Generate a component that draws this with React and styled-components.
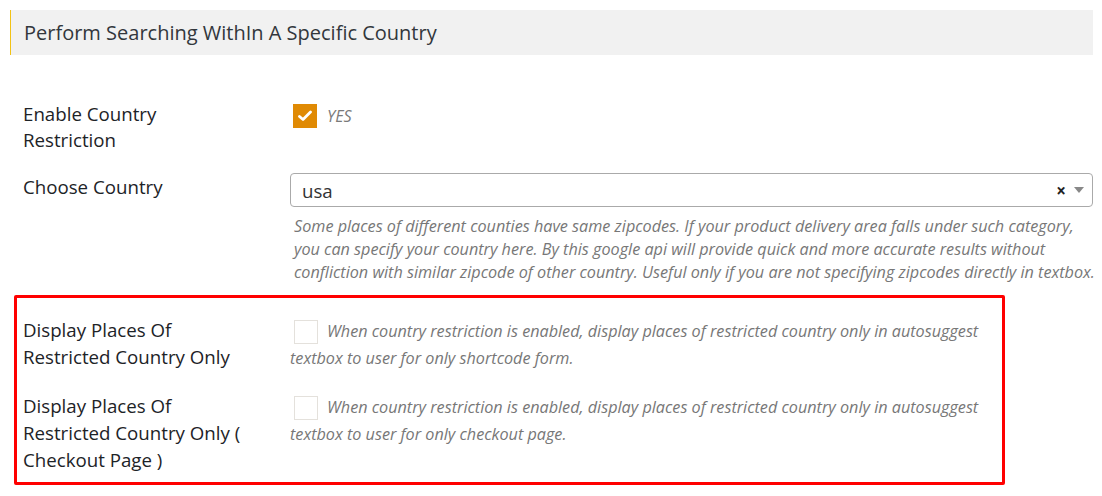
import React from "react";
import styled, { createGlobalStyle } from "styled-components";

const GlobalStyle = createGlobalStyle`
  body {
    margin: 0;
    background: #fff;
    font-family: "Open Sans", "Noto Sans", sans-serif;
  }
`;

const Page = styled.div`
  width: 1102px;
  padding-top: 10px;
`;

const Header = styled.h2`
  margin: 0 9px 0 10px;
  height: 45px;
  box-sizing: border-box;
  display: flex;
  align-items: center;
  padding-left: 13px;
  background: #f1f1f1;
  border-left: 1px solid #f2c214;
  font-size: 20px;
  font-weight: 400;
  color: #32373c;
`;

const Form = styled.div`
  margin: 0 2px 0 14px;
`;

const Row = styled.div`
  display: grid;
  grid-template-columns: 224px 1fr;
  column-gap: 43px;
  padding: ${({ $pad }) => $pad};
`;

const Label = styled.div`
  font-size: 18.7px;
  line-height: ${({ $lh }) => $lh || "26px"};
  color: #1d2327;
  padding-top: ${({ $top }) => $top || "0"};
`;

const Value = styled.div`
  display: flex;
  flex-direction: column;
  align-items: flex-start;
`;

const CheckWrap = styled.div`
  display: flex;
  align-items: center;
  margin: 3px 0 0 3px;
`;

const Box = styled.span`
  display: inline-flex;
  align-items: center;
  justify-content: center;
  box-sizing: border-box;
  width: 24px;
  height: 24px;
  background: ${({ $checked }) => ($checked ? "#e08a04" : "#fff")};
  border: 1px solid ${({ $checked }) => ($checked ? "#e08a04" : "#e4e1dc")};
  vertical-align: top;
  margin: ${({ $inline }) => ($inline ? "2px 9px 0 4px" : "0")};
`;

const YesText = styled.span`
  margin-left: 10px;
  font-size: 16.2px;
  font-style: italic;
  color: #7a7a7a;
`;

const Select = styled.div`
  display: flex;
  align-items: center;
  width: 803px;
  height: 34px;
  box-sizing: border-box;
  border: 1px solid #aaa;
  border-radius: 4px;
  padding: 0 8px 0 11px;
`;

const Chosen = styled.span`
  flex: 1;
  font-size: 18.7px;
  color: #333;
`;

const Clear = styled.span`
  font-size: 17px;
  font-weight: 700;
  color: #222;
  margin-right: 8px;
  line-height: 1;
`;

const Arrow = styled.span`
  width: 0;
  height: 0;
  border-style: solid;
  border-width: 6px 5px 0 5px;
  border-color: #888 transparent transparent transparent;
`;

const Description = styled.p`
  margin: ${({ $m }) => $m || "0"};
  font-size: 16.2px;
  font-style: italic;
  line-height: ${({ $lh }) => $lh || "23px"};
  color: #777;
`;

const Highlight = styled.div`
  width: 991px;
  box-sizing: border-box;
  border: 3px solid #ff0000;
  border-radius: 2px;
`;

const Tick = () => (
  <svg width="14" height="12" viewBox="0 0 14 12">
    <path
      d="M1.5 6.5 L5 9.5 L12.5 2"
      fill="none"
      stroke="#fff"
      strokeWidth="2.8"
      strokeLinecap="round"
      strokeLinejoin="round"
    />
  </svg>
);

export default function App() {
  return (
    <Page>
      <GlobalStyle />
      <Header>Perform Searching WithIn A Specific Country</Header>
      <Form>
        <Row $pad="46px 0 10px 9px">
          <Label>Enable Country Restriction</Label>
          <Value>
            <CheckWrap>
              <Box $checked>
                <Tick />
              </Box>
              <YesText>YES</YesText>
            </CheckWrap>
          </Value>
        </Row>
        <Row $pad="10px 0 11px 9px">
          <Label $top="1px">Choose Country</Label>
          <Value>
            <Select>
              <Chosen>usa</Chosen>
              <Clear>×</Clear>
              <Arrow />
            </Select>
            <Description $m="8px 0 0 4px">
              Some places of different counties have same zipcodes. If your
              product delivery area falls under such category, you can specify
              your country here. By this google api will provide quick and more
              accurate results without confliction with similar zipcode of other
              country. Useful only if you are not specifying zipcodes directly
              in textbox.
            </Description>
          </Value>
        </Row>
        <Highlight>
          <Row $pad="18px 0 9px 6px">
            <Label $lh="27px">Display Places Of Restricted Country Only</Label>
            <Value>
              <Description $lh="27px" $m="2px 0 0 0">
                <Box $inline />
                When country restriction is enabled, display places of
                restricted country only in autosuggest textbox to user for only
                shortcode form.
              </Description>
            </Value>
          </Row>
          <Row $pad="11px 0 9px 6px">
            <Label $lh="27px">
              Display Places Of Restricted Country Only ( Checkout Page )
            </Label>
            <Value>
              <Description $lh="27px" $m="2px 0 0 0">
                <Box $inline />
                When country restriction is enabled, display places of
                restricted country only in autosuggest textbox to user for only
                checkout page.
              </Description>
            </Value>
          </Row>
        </Highlight>
      </Form>
    </Page>
  );
}
